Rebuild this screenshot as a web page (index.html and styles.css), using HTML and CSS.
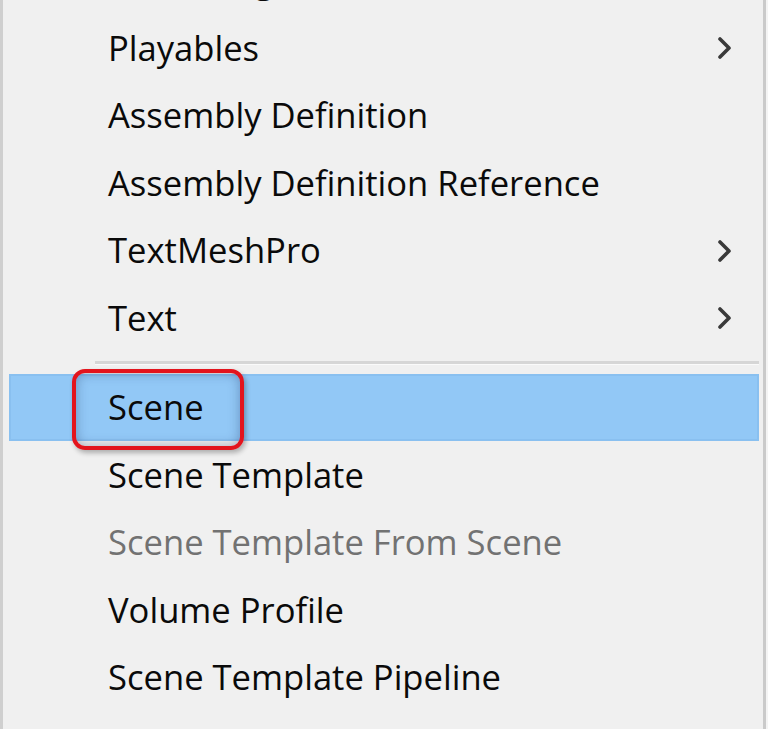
FILE: index.html
```html
<!DOCTYPE html>
<html lang="en">
<head>
<meta charset="utf-8">
<title>Create menu</title>
<link rel="stylesheet" href="styles.css">
</head>
<body>
<div class="menu">
  <ul class="list">
    <li class="item"><span class="label">Rendering</span><svg class="chev" viewBox="0 0 14 22"><polyline points="2,2 11,11 2,20"/></svg></li>
    <li class="item"><span class="label">Playables</span><svg class="chev" viewBox="0 0 14 22"><polyline points="2,2 11,11 2,20"/></svg></li>
    <li class="item"><span class="label">Assembly Definition</span></li>
    <li class="item"><span class="label">Assembly Definition Reference</span></li>
    <li class="item"><span class="label">TextMeshPro</span><svg class="chev" viewBox="0 0 14 22"><polyline points="2,2 11,11 2,20"/></svg></li>
    <li class="item"><span class="label">Text</span><svg class="chev" viewBox="0 0 14 22"><polyline points="2,2 11,11 2,20"/></svg></li>
    <li class="sep"></li>
    <li class="item active"><span class="label">Scene</span><span class="callout"></span></li>
    <li class="item"><span class="label">Scene Template</span></li>
    <li class="item disabled"><span class="label">Scene Template From Scene</span></li>
    <li class="item"><span class="label">Volume Profile</span></li>
    <li class="item"><span class="label">Scene Template Pipeline</span></li>
    <li class="item"><span class="label">Prefab</span></li>
  </ul>
</div>
</body>
</html>
```

FILE: styles.css
```css
html, body {
  margin: 0;
  padding: 0;
  background: #f0f0f0;
}

.menu {
  width: 768px;
  height: 729px;
  overflow: hidden;
  box-sizing: border-box;
  background: #f0f0f0;
  border-left: 3px solid #cfcfcf;
  border-right: 2px solid #f4f4f4;
  box-shadow: inset -3px 0 0 #cacaca;
  font-family: "Open Sans", "Noto Sans", sans-serif;
  font-size: 34.6px;
  color: #0a0a0a;
}

.list {
  list-style: none;
  margin: -53px 0 0 0;
  padding: 0 7px 0 6px;
}

.item {
  position: relative;
  height: 67.5px;
  box-sizing: border-box;
  display: flex;
  align-items: center;
  justify-content: space-between;
  padding: 0 25px 0 97px;
  border: 2px solid transparent;
}

.label {
  line-height: 1;
  white-space: nowrap;
}

.item.disabled {
  color: #727272;
}

.item.active {
  background: #92c8f6;
  border-color: #89c0f0;
}

.chev {
  width: 14px;
  height: 22px;
  flex: none;
}

.chev polyline {
  fill: none;
  stroke: #3a3a3a;
  stroke-width: 3.6;
  stroke-linecap: round;
  stroke-linejoin: round;
}

.sep {
  height: 21.75px;
  display: flex;
  align-items: center;
  padding-left: 86px;
}

.sep::before {
  content: "";
  display: block;
  width: 100%;
  height: 3px;
  background: #d6d6d6;
  border-bottom: 1px solid #fafafa;
}

.callout {
  position: absolute;
  left: 61px;
  top: -7px;
  width: 172px;
  height: 81px;
  box-sizing: border-box;
  border: 4px solid #e3141d;
  border-radius: 13px;
  box-shadow: 2px 3px 5px rgba(0, 0, 0, 0.28), inset 0 0 12px rgba(20, 40, 90, 0.35);
  pointer-events: none;
}
```
